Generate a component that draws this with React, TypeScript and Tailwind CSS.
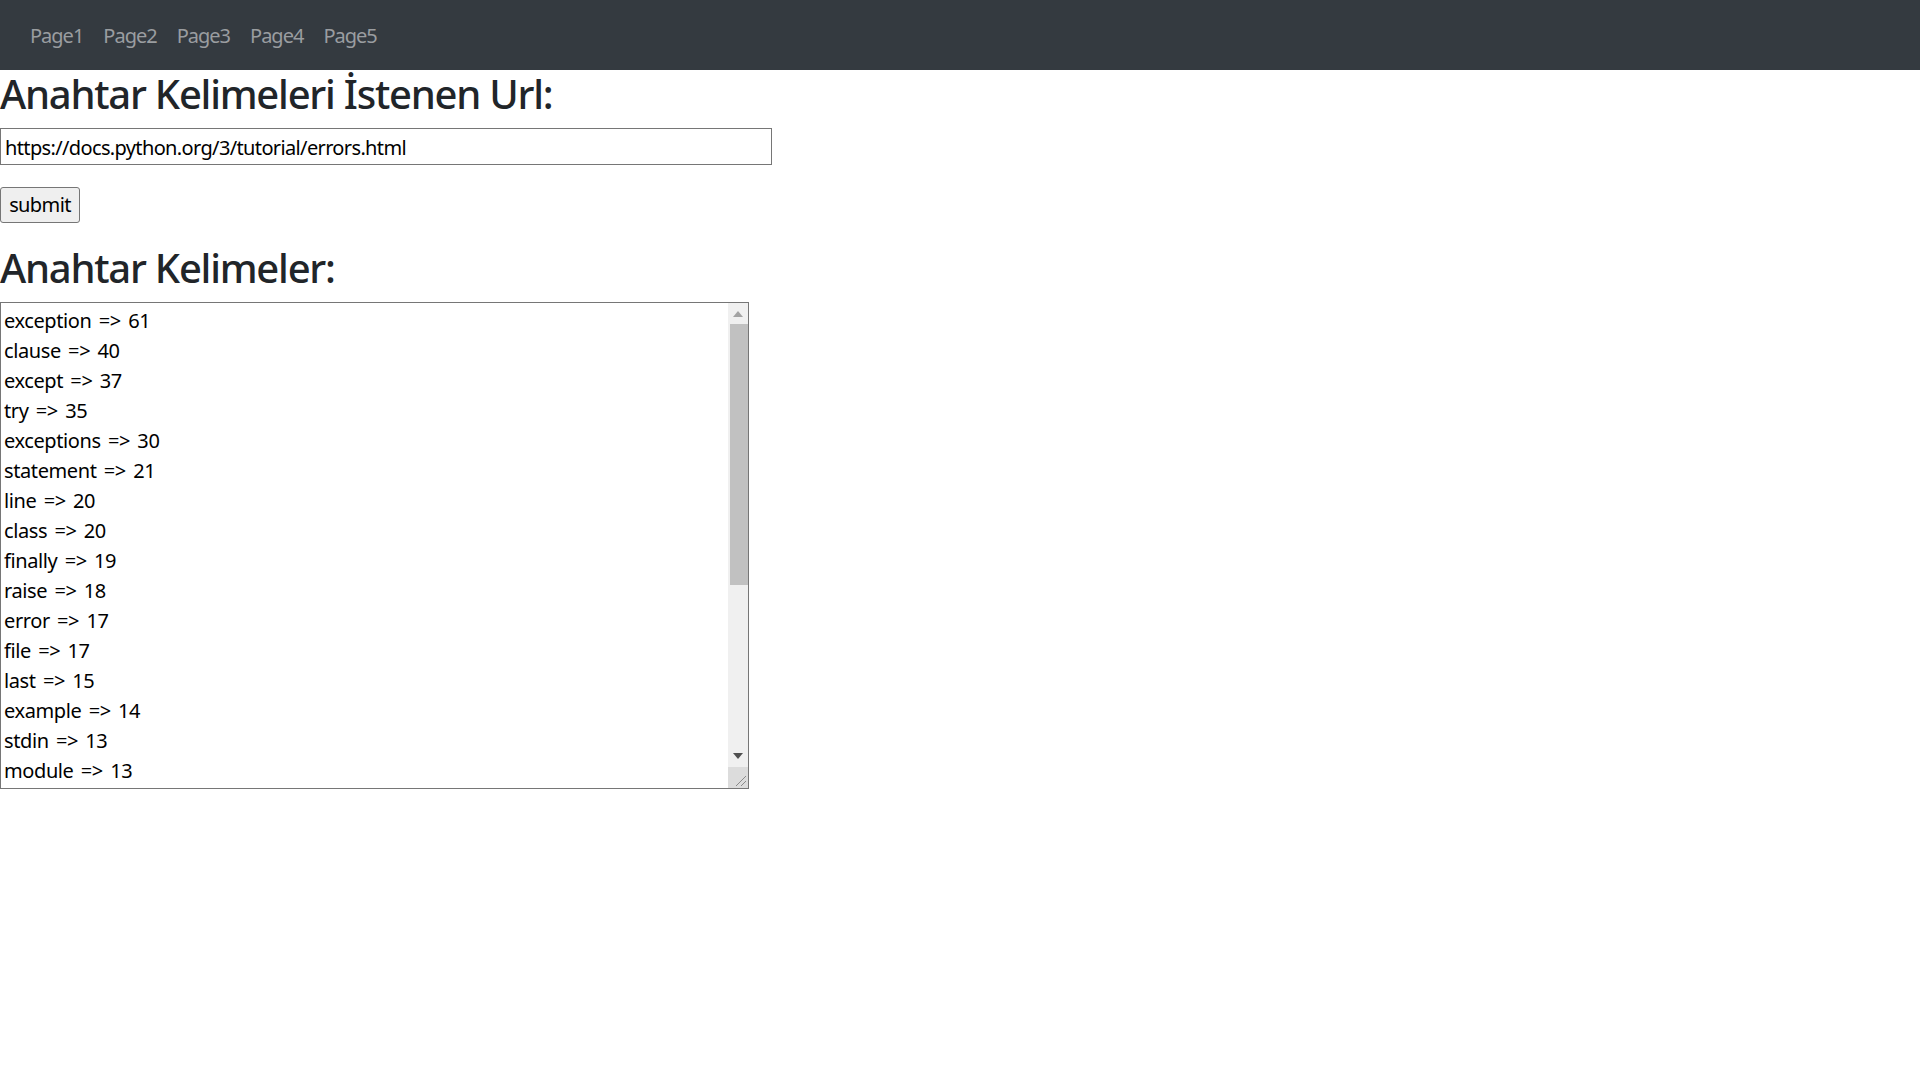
const PAGES = ["Page1", "Page2", "Page3", "Page4", "Page5"];

const KEYWORDS: [string, number][] = [
  ["exception", 61],
  ["clause", 40],
  ["except", 37],
  ["try", 35],
  ["exceptions", 30],
  ["statement", 21],
  ["line", 20],
  ["class", 20],
  ["finally", 19],
  ["raise", 18],
  ["error", 17],
  ["file", 17],
  ["last", 15],
  ["example", 14],
  ["stdin", 13],
  ["module", 13],
];

function Navbar() {
  return (
    <nav className="flex h-[70px] items-center bg-[#343a40] px-[20px]">
      {PAGES.map((p) => (
        <a key={p} className="px-[10px] pt-[2px] text-[20px] leading-[30px] tracking-[-0.05em] text-[#9a9da0]">
          {p}
        </a>
      ))}
    </nav>
  );
}

function Scrollbar() {
  return (
    <div className="flex w-[20px] flex-col bg-[#f0f0f0]">
      <div className="flex h-[21px] items-center justify-center">
        <svg width="10" height="6" viewBox="0 0 10 6">
          <polygon points="0,6 5,0 10,6" fill="#a3a3a3" />
        </svg>
      </div>
      <div className="ml-[2px] h-[261px] bg-[#c1c1c1]" />
      <div className="flex-1" />
      <div className="flex h-[22px] items-center justify-center">
        <svg width="10" height="6" viewBox="0 0 10 6">
          <polygon points="0,0 10,0 5,6" fill="#505050" />
        </svg>
      </div>
      <div className="relative h-[21px] bg-[#dcdcdc]">
        <svg className="absolute bottom-[1px] right-[1px]" width="12" height="12" viewBox="0 0 12 12">
          <line x1="11" y1="1" x2="1" y2="11" stroke="#8a8a8a" strokeWidth="1" />
          <line x1="11" y1="6" x2="6" y2="11" stroke="#8a8a8a" strokeWidth="1" />
        </svg>
      </div>
    </div>
  );
}

export default function App() {
  return (
    <div className="min-h-[1080px] bg-white font-['Noto_Sans','Open_Sans',sans-serif] text-[#212529]">
      <Navbar />
      <h2 className="mb-[10px] text-[40px] font-medium leading-[48px] tracking-[-0.031em]">Anahtar Kelimeleri İstenen Url:</h2>
      <div className="h-[37px] w-[772px] border border-[#767676] px-[4px] pt-[1px] text-[20px] leading-[35px] tracking-[-0.032em] text-black">
        https://docs.python.org/3/tutorial/errors.html
      </div>
      <div className="mt-[22px] flex h-[36px] w-[80px] items-center justify-center rounded-[3px] border border-[#767676] bg-[#efefef] text-[20px] tracking-[-0.03em] text-black">
        submit
      </div>
      <h2 className="mt-[21px] mb-[10px] text-[40px] font-medium leading-[48px] tracking-[-0.031em]">Anahtar Kelimeler:</h2>
      <div className="flex h-[487px] w-[749px] border border-[#767676]">
        <div className="flex-1 overflow-hidden px-[3px] pt-[3px] text-[20px] leading-[30px] tracking-[-0.02em] text-black [word-spacing:2.5px]">
          {KEYWORDS.map(([k, n]) => (
            <div key={k}>
              {k} =&gt; {n}
            </div>
          ))}
        </div>
        <Scrollbar />
      </div>
    </div>
  );
}
